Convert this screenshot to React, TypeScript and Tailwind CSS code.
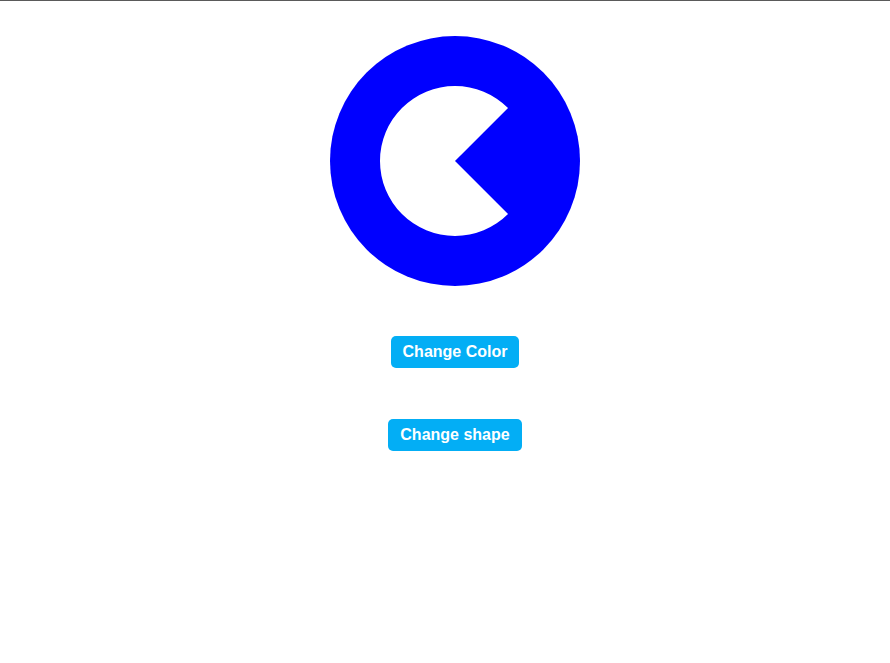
import React from "react";

export default function App() {
  return (
    <div className="min-h-[663px] w-full bg-white border-t border-[#5a5a5a]" style={{ fontFamily: '"Liberation Sans", Arial, sans-serif' }}>
      <div className="flex flex-col items-center pl-[20px] pt-[35px]">
        <svg width="250" height="250" viewBox="0 0 250 250" className="block">
          <circle cx="125" cy="125" r="125" fill="#0000ff" />
          <path d="M125 125 L178.03 71.97 A75 75 0 1 0 178.03 178.03 Z" fill="#ffffff" />
        </svg>
        <button className="mt-[50px] h-[32px] px-[12px] rounded-[5px] bg-[#03aef5] text-white font-bold text-[16px] leading-[18px]">
          Change Color
        </button>
        <button className="mt-[51px] h-[32px] px-[12px] rounded-[5px] bg-[#03aef5] text-white font-bold text-[16px] leading-[18px]">
          Change shape
        </button>
      </div>
    </div>
  );
}
